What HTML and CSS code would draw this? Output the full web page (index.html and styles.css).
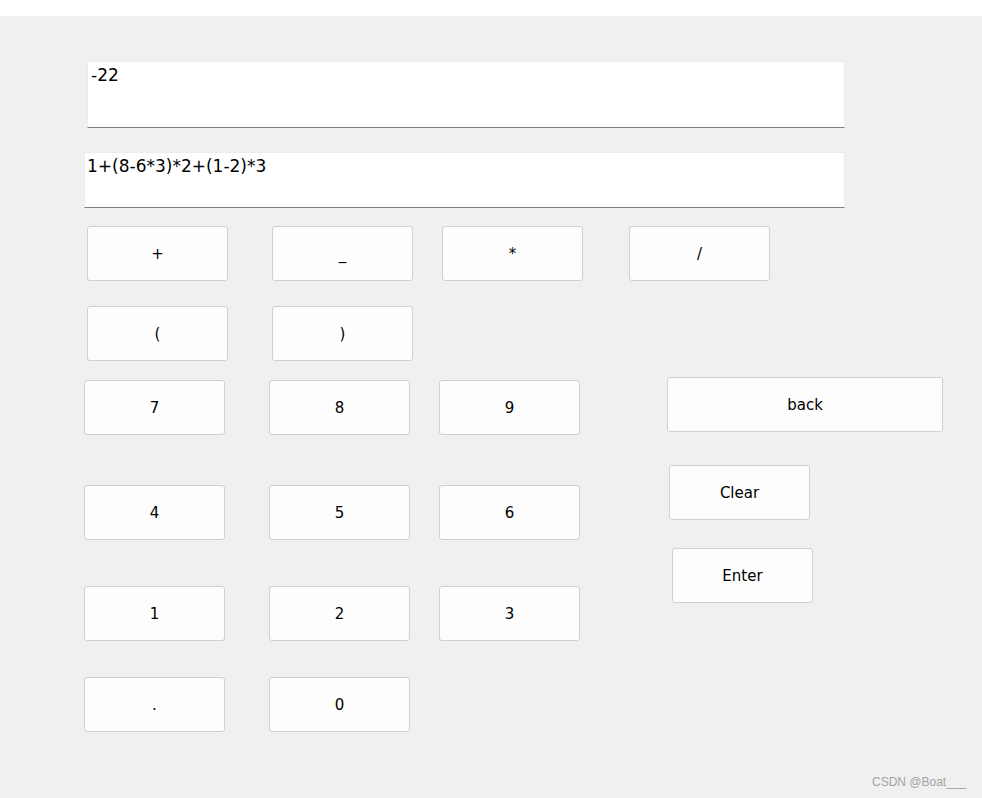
FILE: index.html
```html
<!DOCTYPE html>
<html>
<head>
<meta charset="utf-8">
<link rel="stylesheet" href="styles.css">
</head>
<body>
<div class="topstrip"></div>
<div class="form">
  <div class="display result">-22</div>
  <div class="display expr">1+(8-6*3)*2+(1-2)*3</div>

  <div class="row ops1">
    <button class="btn b-plus">+</button>
    <button class="btn b-minus">_</button>
    <button class="btn b-mul">*</button>
    <button class="btn b-div">/</button>
  </div>
  <div class="row ops2">
    <button class="btn b-plus">(</button>
    <button class="btn b-minus">)</button>
  </div>

  <div class="lower">
    <div class="pad">
      <div class="row prow r1">
        <button class="btn n1">7</button>
        <button class="btn n2">8</button>
        <button class="btn n3">9</button>
      </div>
      <div class="row prow r2">
        <button class="btn n1">4</button>
        <button class="btn n2">5</button>
        <button class="btn n3">6</button>
      </div>
      <div class="row prow r3">
        <button class="btn n1">1</button>
        <button class="btn n2">2</button>
        <button class="btn n3">3</button>
      </div>
      <div class="row prow r4">
        <button class="btn n1">.</button>
        <button class="btn n2">0</button>
      </div>
    </div>
    <div class="side">
      <button class="btn back">back</button>
      <button class="btn clear">Clear</button>
      <button class="btn enter">Enter</button>
    </div>
  </div>

  <div class="watermark">CSDN @Boat___</div>
</div>
</body>
</html>
```

FILE: styles.css
```css
html, body {
  margin: 0;
  padding: 0;
  background: #ffffff;
}
body {
  width: 982px;
  height: 798px;
  overflow: hidden;
  font-family: "DejaVu Sans", sans-serif;
}
.topstrip {
  height: 16px;
  background: #ffffff;
}
.form {
  position: relative;
  height: 782px;
  background: #f0f0f0;
  padding-top: 45px;
  box-sizing: border-box;
}
.display {
  background: #ffffff;
  box-sizing: border-box;
  border: 1px solid #ececec;
  border-bottom: 1px solid #808080;
  font-size: 17px;
  line-height: 20px;
  color: #000;
  padding: 3px 0 0 3px;
}
.result {
  margin-left: 87px;
  width: 758px;
  height: 67px;
}
.expr {
  margin-top: 24px;
  margin-left: 84px;
  width: 761px;
  height: 56px;
  padding-left: 2px;
}
.row {
  display: flex;
}
.btn {
  flex: none;
  width: 141px;
  height: 55px;
  box-sizing: border-box;
  background: #fdfdfd;
  border: 1px solid #d0d0d0;
  border-radius: 3px;
  font-family: "DejaVu Sans", sans-serif;
  font-size: 15px;
  color: #000;
  padding: 0;
  margin: 0;
  display: flex;
  align-items: center;
  justify-content: center;
}
.ops1 {
  margin-top: 18px;
}
.ops2 {
  margin-top: 25px;
}
.b-plus { margin-left: 87px; }
.b-minus { margin-left: 44px; }
.b-mul { margin-left: 29px; }
.b-div { margin-left: 46px; }

.lower {
  display: flex;
  margin-top: 16px;
}
.pad {
  padding-top: 3px;
}
.n1 { margin-left: 84px; }
.n2 { margin-left: 44px; }
.n3 { margin-left: 29px; }
.r2 { margin-top: 50px; }
.r3 { margin-top: 46px; }
.r4 { margin-top: 36px; }

.side {
  display: flex;
  flex-direction: column;
  align-items: flex-start;
  margin-left: 87px;
}
.back {
  width: 276px;
}
.clear {
  margin-top: 33px;
  margin-left: 2px;
}
.enter {
  margin-top: 28px;
  margin-left: 5px;
}
.watermark {
  position: absolute;
  left: 872px;
  top: 759px;
  font-family: "Liberation Sans", Arial, sans-serif;
  font-size: 12px;
  line-height: 14px;
  color: #a3a3a3;
  white-space: nowrap;
}
```
